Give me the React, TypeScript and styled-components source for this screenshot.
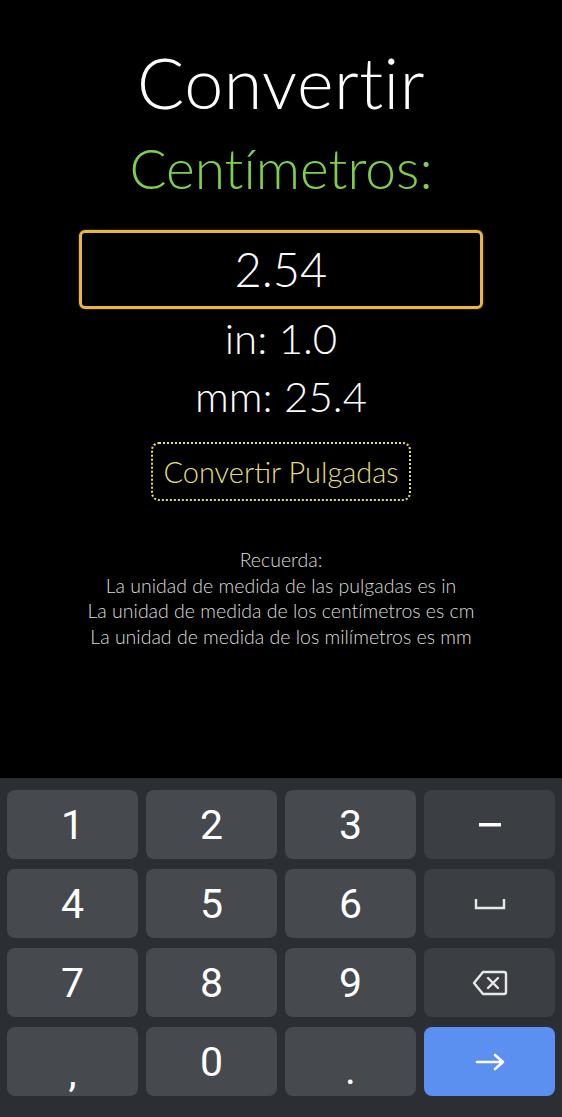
import React from 'react';
import styled, { createGlobalStyle } from 'styled-components';

const GlobalStyle = createGlobalStyle`
  html, body {
    margin: 0;
    padding: 0;
    background: #000;
  }
  #root {
    min-height: 100vh;
  }
`;

const Screen = styled.div`
  display: flex;
  flex-direction: column;
  height: 1117px;
  width: 562px;
  background: #000;
  overflow: hidden;
`;

const Content = styled.main`
  flex: 1;
  display: flex;
  flex-direction: column;
  align-items: center;
  font-family: Lato, 'Open Sans', sans-serif;
  font-weight: 300;
  font-variant-ligatures: none;
  color: #fff;
  padding-top: 40px;
`;

const Title = styled.h1`
  margin: 0;
  font-size: 70px;
  font-weight: 300;
  line-height: 84px;
  letter-spacing: 0.5px;
`;

const Subtitle = styled.h2`
  margin: 12px 0 0;
  font-size: 55px;
  font-weight: 300;
  line-height: 64px;
  color: #7ed04c;
`;

const ValueBox = styled.div`
  box-sizing: border-box;
  margin-top: 30px;
  width: 404px;
  height: 79px;
  border: 3px solid #eab448;
  border-radius: 6px;
  box-shadow: 0 0 2px rgba(234, 180, 72, 0.6);
  display: flex;
  align-items: center;
  justify-content: center;
  font-size: 47px;
  line-height: 1;
`;

const Result = styled.div<{ $top: number }>`
  margin-top: ${(p) => p.$top}px;
  font-size: 42px;
  line-height: 52px;
`;

const ConvertButton = styled.button`
  margin-top: 20px;
  box-sizing: border-box;
  height: 59px;
  padding: 0 10px;
  background: transparent;
  border: 2px dotted #e6e06a;
  border-radius: 8px;
  color: #e2de78;
  font-family: Lato, 'Open Sans', sans-serif;
  font-weight: 300;
  font-size: 29px;
`;

const Note = styled.div`
  margin-top: 46px;
  text-align: center;
  font-size: 19.5px;
  line-height: 25.5px;
  color: #dcdcdc;
`;

const Keyboard = styled.div`
  background: #2b2f33;
  padding: 12px 7px 21px;
  display: grid;
  grid-template-columns: repeat(4, 131px);
  grid-auto-rows: 69px;
  column-gap: 8px;
  row-gap: 10px;
`;

const Key = styled.div<{ $kind?: 'digit' | 'func' | 'action' }>`
  border-radius: 8px;
  display: flex;
  align-items: center;
  justify-content: center;
  font-family: Roboto, 'Noto Sans', sans-serif;
  font-size: 41px;
  color: #fff;
  background: ${(p) =>
    p.$kind === 'action' ? '#5b8ff0' : p.$kind === 'func' ? '#3b3f44' : '#46494d'};
`;

const Backspace = () => (
  <svg width="36" height="28" viewBox="0 0 36 28" fill="none" stroke="#e8e8e8" strokeWidth="2.4" strokeLinejoin="round">
    <path d="M11 3 H32 a2 2 0 0 1 2 2 V23 a2 2 0 0 1 -2 2 H11 L2 14 Z" />
    <path d="M16 9 L26 19 M26 9 L16 19" strokeLinecap="round" />
  </svg>
);

const SpaceIcon = () => (
  <svg width="32" height="14" viewBox="0 0 32 14" fill="none" stroke="#e8e8e8" strokeWidth="2.4">
    <path d="M2 2 V11 H30 V2" />
  </svg>
);

const MinusIcon = () => (
  <svg width="22" height="6" viewBox="0 0 22 6">
    <rect x="0" y="1" width="22" height="3.5" fill="#fff" />
  </svg>
);

const ArrowIcon = () => (
  <svg width="32" height="20" viewBox="0 0 32 20" fill="none" stroke="#fff" strokeWidth="2.6" strokeLinecap="round" strokeLinejoin="round">
    <path d="M3 10 H29 M21 3 L29 10 L21 17" />
  </svg>
);

const Dot = styled.span<{ $offset: number }>`
  position: relative;
  top: ${(p) => p.$offset}px;
`;

export default function App() {
  return (
    <Screen>
      <GlobalStyle />
      <Content>
        <Title>Convertir</Title>
        <Subtitle>Centímetros:</Subtitle>
        <ValueBox>2.54</ValueBox>
        <Result $top={3}>in: 1.0</Result>
        <Result $top={6}>mm: 25.4</Result>
        <ConvertButton>Convertir Pulgadas</ConvertButton>
        <Note>
          Recuerda:
          <br />
          La unidad de medida de las pulgadas es in
          <br />
          La unidad de medida de los centímetros es cm
          <br />
          La unidad de medida de los milímetros es mm
        </Note>
      </Content>
      <Keyboard>
        <Key>1</Key>
        <Key>2</Key>
        <Key>3</Key>
        <Key $kind="func"><MinusIcon /></Key>
        <Key>4</Key>
        <Key>5</Key>
        <Key>6</Key>
        <Key $kind="func"><SpaceIcon /></Key>
        <Key>7</Key>
        <Key>8</Key>
        <Key>9</Key>
        <Key $kind="func"><Backspace /></Key>
        <Key><Dot $offset={10}>,</Dot></Key>
        <Key>0</Key>
        <Key><Dot $offset={8}>.</Dot></Key>
        <Key $kind="action"><ArrowIcon /></Key>
      </Keyboard>
    </Screen>
  );
}
